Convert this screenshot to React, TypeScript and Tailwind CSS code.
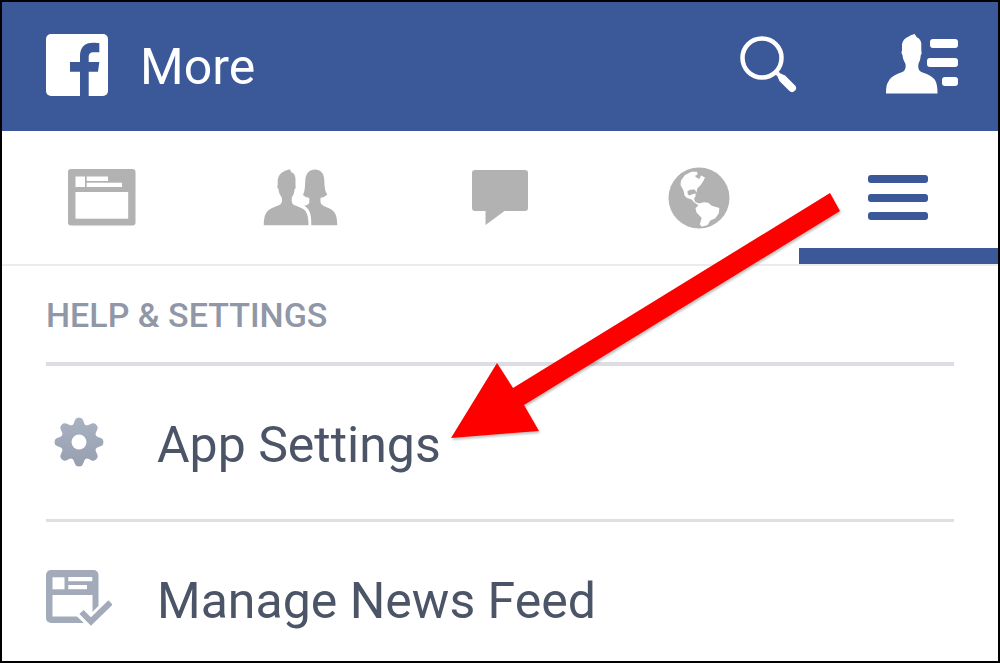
import type { ReactNode } from 'react'

const LogoIcon = () => (
    <svg width="62" height="62" viewBox="0 0 62 62" aria-hidden="true">
        <rect width="62" height="62" rx="5" fill="#fff" />
        <path
            fill="#3b5998"
            d="M34 62V37.7H24V28h10v-6c0-9 5-13.3 13-13.3 3 0 5.5.2 6.3.5v9.1H48c-4 0-5.3 1.7-5.3 4.7v5h10.6L52 37.7h-9.3V62z"
        />
    </svg>
)

const SearchIcon = () => (
    <svg width="57" height="57" viewBox="0 0 57 57" fill="none" stroke="#fff" strokeLinecap="round" aria-hidden="true">
        <circle cx="22" cy="22" r="19.5" strokeWidth="4.5" />
        <path strokeWidth="4" d="M36 36l5 5" />
        <path strokeWidth="8" d="M43 43l9 9" />
        <path strokeWidth="6" d="M41 41l4 4" />
    </svg>
)

const ContactsIcon = () => (
    <svg width="72" height="62" viewBox="0 0 72 62" fill="#fff" aria-hidden="true">
        <path d="M0 59.5C0 54 .5 50 2.3 47.7 5.5 41.5 11.5 40 17.3 37.5 20 35.5 20 32 19.3 29.5 17.5 26.5 16.8 24 16.5 21 15.3 19.5 15.3 18 16 16.5V10C17 6 19.5 3.5 22.3 2.7 24.5 1.2 26.5.7 28.7 0L30.7 3.3C33.5 4.5 35 6.5 35.3 9.5V17C36 19 35.5 20 34.7 21.5 34.5 25 33.7 27 32.5 29.5 32 33 32 35.5 34.5 37.5 40 40 46 41.5 49 46 51 49.5 51.5 54 51.5 59.5z" />
        <rect x="44" y="5" width="28" height="9" rx="3" />
        <rect x="41" y="24" width="31" height="9" rx="3" />
        <rect x="56" y="43" width="16" height="9" rx="3" />
    </svg>
)

const FeedIcon = () => (
    <svg width="68" height="57" viewBox="0 0 68 57" fill="#fff" aria-hidden="true">
        <rect width="67.5" height="56.5" rx="3" fill="#b2b2b2" />
        <rect x="7.5" y="7.5" width="9.5" height="10.5" />
        <rect x="18.7" y="7.5" width="21.3" height="4.5" />
        <rect x="18.7" y="13.7" width="35.3" height="4.3" />
        <rect x="7.5" y="23" width="52.7" height="26.7" />
    </svg>
)

const FriendsIcon = () => (
    <svg width="75" height="57" viewBox="0 0 75 57" fill="#b2b2b2" aria-hidden="true">
        <path d="M.8 56.3C.8 50 1.5 46 4 42.7 7 39 12 38 17 35.7 19.5 33.5 19.5 30.5 18.5 28 16.5 25.5 15.8 23 15.5 20 14.2 19 14 17.5 14.7 16V11C15.3 6.5 17.5 4 20.3 2.7 22.5 1.3 25 1 27 .3L28.3 3.3C31 4 32.3 6.5 32.5 10V16.5C33 18.5 32.5 19.5 31.5 20.5 31.3 23.5 30.5 26 29 28 28.5 31.5 28.3 34 31 36 35.5 38 40 39 42.5 42 45 46 45.5 50.5 45.5 56.3z" />
        <path d="M48.3 56.3C48.3 50 48 45 46 41.5 45 39.5 43.5 38 41.3 36.7 43.5 36.3 46 35.5 46.3 33.5V29C44 28.5 41.5 27.7 40 26 42 22 42 17 42.3 11 42.8 4 46.5.5 52 .5 57.5.5 61 4 61.3 11 61.5 17 61.7 22 64.3 25.5 62.5 27.5 60 28.5 57.5 28.7V33C57.5 36 62 37.5 65.5 39 73 42 74 47.5 74.3 56.3z" />
    </svg>
)

const ChatIcon = () => (
    <svg width="56" height="57" viewBox="0 0 56 57" fill="#b2b2b2" aria-hidden="true">
        <path d="M3 1h50a3 3 0 0 1 3 3v35a3 3 0 0 1-3 3H32.5L13.5 56V42H3a3 3 0 0 1-3-3V4a3 3 0 0 1 3-3z" />
    </svg>
)

const GlobeIcon = () => (
    <svg width="62" height="62" viewBox="0 0 62 62" fill="#fff" aria-hidden="true">
        <circle cx="31" cy="31" r="30.5" fill="#b2b2b2" />
        <path d="M23.5 4.7L17 8l-4 5.5-.5 4.5 3 5.5 1 5 2.5 2.5 4.7 1.5 2.6 3 4 2.7.9-1.7-4-1.5-1.2-3.5 1.5-2 .2-3-3.5.7-2.5 1.3-1.8-1-.5-3 2.5-1.7 5-.3 1.5 3.2 1-4.4 3.3-3.3 2.8-4.3 1.5-3.2-4-2-1.5 3.5-3.5-1.7-1-1.6 2.6-1-.5-3z" />
        <path d="M30.7 36.5l5.3-1.2 4.3.5 3.4 2.9 7.6 2.3-.5 5.3-3.5 5-5 2.2-2.7 4.5-5.8 1.7-2-2.5 1.9-6.2-5.2-5.5-1-4.2 2.5-2.5z" />
    </svg>
)

const MenuIcon = () => (
    <svg width="60" height="46" viewBox="0 0 60 46" fill="#3b5998" aria-hidden="true">
        <rect y="0" width="60" height="8" rx="3" />
        <rect y="19" width="60" height="8" rx="3" />
        <rect y="37" width="60" height="8" rx="3" />
    </svg>
)

const GearIcon = () => (
    <svg width="66" height="60" viewBox="0 0 66 60" aria-hidden="true">
        <defs>
            <linearGradient id="gear" x1="0" y1="4" x2="0" y2="52" gradientUnits="userSpaceOnUse">
                <stop offset="0" stopColor="#a9b2c1" />
                <stop offset="1" stopColor="#979fb0" />
            </linearGradient>
            <mask id="gear-shape" maskUnits="userSpaceOnUse" x="0" y="0" width="66" height="60">
                <g fill="#fff" transform="translate(33 28)">
                    <circle r="18" />
                    {[0, 45, 90, 135, 180, 225, 270, 315].map(angle => (
                        <path key={angle} transform={`rotate(${angle})`} d="M-8-15Q-4.8-18-4-22-3.2-24.5 0-24.5T4-22Q4.8-18 8-15z" />
                    ))}
                    <circle r="7.5" fill="#000" />
                </g>
            </mask>
        </defs>
        <rect width="66" height="60" fill="url(#gear)" mask="url(#gear-shape)" />
    </svg>
)

const ManageFeedIcon = () => (
    <svg width="66" height="60" viewBox="0 0 66 60" fill="#fff" aria-hidden="true">
        <rect width="52.5" height="53" rx="5" fill="#a3abbb" />
        <rect x="6.5" y="7.3" width="12" height="12" />
        <rect x="22.3" y="7" width="24" height="4.2" />
        <rect x="22.3" y="15" width="18.7" height="4.2" />
        <rect x="6.5" y="25" width="40" height="21.5" />
        <path fill="none" stroke="#fff" strokeWidth="12" d="M33 40l12 11.7L68 29" />
        <path fill="none" stroke="#a3abbb" strokeWidth="6" d="M35.5 42l9.5 9.5L64.5 32.5" />
    </svg>
)

const tabs: { label: string; icon: ReactNode }[] = [
    { label: 'News Feed', icon: <FeedIcon /> },
    { label: 'Friend Requests', icon: <FriendsIcon /> },
    { label: 'Messages', icon: <ChatIcon /> },
    { label: 'Notifications', icon: <GlobeIcon /> },
    { label: 'More', icon: <MenuIcon /> },
]

const settings: { label: string; icon: ReactNode }[] = [
    { label: 'App Settings', icon: <GearIcon /> },
    { label: 'Manage News Feed', icon: <ManageFeedIcon /> },
]

const App = () => {
    return (
        <div className="relative min-h-screen border-2 border-black bg-white font-[Roboto,sans-serif]">
            <header className="flex items-center bg-[#3b5998] h-[129px] pl-11 pr-10 pb-1">
                <LogoIcon />
                <h1 className="flex-1 pt-1 pl-8 text-[50px] leading-[60px] text-white">More</h1>
                <button className="mr-[89px]" aria-label="Search">
                    <SearchIcon />
                </button>
                <button aria-label="Contacts">
                    <ContactsIcon />
                </button>
            </header>

            <nav className="grid grid-cols-5 h-[135px] border-b-2 border-[#ececec]">
                {tabs.map(tab => (
                    <button
                        key={tab.label}
                        aria-label={tab.label}
                        className={`flex items-center justify-center pt-4 border-b-16 ${tab.label === 'More' ? 'border-[#3b5998]' : 'border-transparent'}`}
                    >
                        {tab.icon}
                    </button>
                ))}
            </nav>

            <main className="px-11">
                <h2 className="pt-[29px] pb-[27px] border-b-4 border-[#dcdee3] text-[34px] leading-10 font-medium text-[#9097a6]">
                    HELP &amp; SETTINGS
                </h2>
                <ul>
                    {settings.map(item => (
                        <li key={item.label} className="border-b-3 border-[#dfe0e6] last:border-b-0">
                            <button className="w-full flex items-center gap-[45px] pt-[47px] pb-11 text-[50px] leading-[60px] text-left text-[#4b5567] in-[li:last-child]:pb-7">
                                {item.icon}
                                <span className="pt-0.5">{item.label}</span>
                            </button>
                        </li>
                    ))}
                </ul>
            </main>

            {/* arrow pointing at App Settings */}
            <svg
                className="absolute left-[449px] top-[191px] pointer-events-none drop-shadow-[1px_2px_1px_rgba(0,0,0,0.25)]"
                width="390"
                height="246"
                viewBox="0 0 390 246"
                aria-hidden="true"
            >
                <path fill="#f00" d="M379 0L389 18 73 212 88 238 0 245 46 170 62 195z" />
            </svg>
        </div>
    )
}

export default App
